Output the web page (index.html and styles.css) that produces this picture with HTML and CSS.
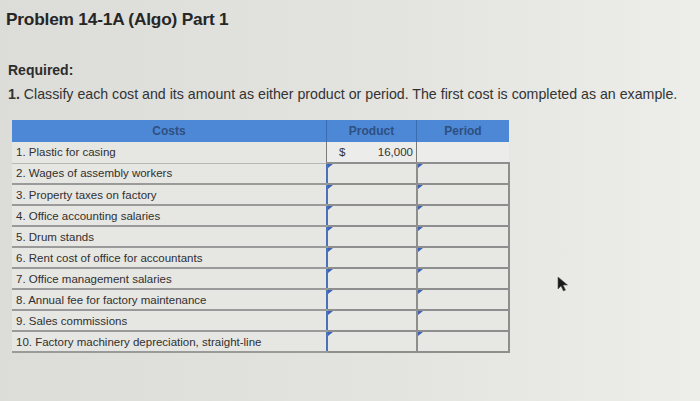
FILE: index.html
```html
<!DOCTYPE html>
<html>
<head>
<meta charset="utf-8">
<link rel="stylesheet" href="styles.css">
</head>
<body>
<div class="page">
  <h1 class="title">Problem 14-1A (Algo) Part 1</h1>
  <div class="req">
    <p class="req-label">Required:</p>
    <p class="req-text"><b>1.</b> Classify each cost and its amount as either product or period. The first cost is completed as an example.</p>
  </div>
  <table class="grid">
    <thead>
      <tr>
        <th class="c-cost">Costs</th>
        <th class="c-prod">Product</th>
        <th class="c-per">Period</th>
      </tr>
    </thead>
    <tbody>
      <tr class="first">
        <td class="cost">1. Plastic for casing</td>
        <td class="amt"><span class="dollar">$</span><span>16,000</span></td>
        <td class="blank"></td>
      </tr>
      <tr><td class="cost">2. Wages of assembly workers</td><td class="inp"><span class="tri"></span></td><td class="inp"><span class="tri"></span></td></tr>
      <tr><td class="cost">3. Property taxes on factory</td><td class="inp"><span class="tri"></span></td><td class="inp"><span class="tri"></span></td></tr>
      <tr><td class="cost">4. Office accounting salaries</td><td class="inp"><span class="tri"></span></td><td class="inp"><span class="tri"></span></td></tr>
      <tr><td class="cost">5. Drum stands</td><td class="inp"><span class="tri"></span></td><td class="inp"><span class="tri"></span></td></tr>
      <tr><td class="cost">6. Rent cost of office for accountants</td><td class="inp"><span class="tri"></span></td><td class="inp"><span class="tri"></span></td></tr>
      <tr><td class="cost">7. Office management salaries</td><td class="inp"><span class="tri"></span></td><td class="inp"><span class="tri"></span></td></tr>
      <tr><td class="cost">8. Annual fee for factory maintenance</td><td class="inp"><span class="tri"></span></td><td class="inp"><span class="tri"></span></td></tr>
      <tr><td class="cost">9. Sales commissions</td><td class="inp"><span class="tri"></span></td><td class="inp"><span class="tri"></span></td></tr>
      <tr><td class="cost">10. Factory machinery depreciation, straight-line</td><td class="inp"><span class="tri"></span></td><td class="inp"><span class="tri"></span></td></tr>
    </tbody>
  </table>
</div>
<svg class="cursor" width="12" height="16" viewBox="0 0 12 16">
  <path d="M1 1 L1 13 L4 10 L6.5 15 L8.5 14 L6 9 L10.5 9 Z" fill="#1a1a1a" stroke="#555" stroke-width="0.6"/>
</svg>
</body>
</html>
```

FILE: styles.css
```css
html, body {
  margin: 0;
  padding: 0;
}
body {
  width: 700px;
  height: 401px;
  overflow: hidden;
  background: linear-gradient(90deg, #dcdcd9 0%, #e3e3e0 55%, #ededea 100%);
  font-family: "Liberation Sans", Arial, sans-serif;
  color: #2a2a2a;
  position: relative;
}
.page {
  padding: 8px 0 0 6px;
}
.title {
  margin: 0;
  font-size: 17.3px;
  font-weight: bold;
  color: #262626;
  letter-spacing: -0.2px;
  line-height: 22px;
}
.req {
  margin-top: 31px;
  padding-left: 2px;
}
.req-label {
  margin: 0;
  font-size: 14px;
  font-weight: bold;
  line-height: 18px;
  color: #2c2c2c;
}
.req-text {
  margin: 6px 0 0 0;
  font-size: 14.2px;
  line-height: 18px;
  color: #333;
}
.grid {
  margin: 17px 0 0 6px;
  border-collapse: collapse;
  table-layout: fixed;
  width: 495px;
  font-size: 11.5px;
}
.grid th {
  background: #4c88d6;
  color: #2f4f80;
  font-weight: bold;
  font-size: 12px;
  height: 22px;
  padding: 0;
  text-align: center;
}
.c-cost { width: 314px; }
.c-prod { width: 89px; border-left: 1px solid #3a6cb0; }
.c-per { width: 92px; border-left: 1px solid #3a6cb0; }
.grid td {
  height: 19px;
  padding: 0;
}
.cost {
  padding-left: 4px !important;
  border-bottom: 2px solid #9a9a9a;
  color: #303030;
  background: #e6e6e3;
}
.first .cost, .first td {
  border-bottom: 1px solid #b8b8b8;
  height: 20px;
}
.amt {
  border-left: 1px solid #7a7a7a;
  background: #ececea;
  position: relative;
  color: #333;
}
.amt span:last-child {
  float: right;
  margin-right: 3px;
  line-height: 20px;
}
.dollar {
  margin-left: 12px;
  line-height: 20px;
}
.blank {
  border-left: 1px solid #7a7a7a;
  background: #ececea;
}
.inp {
  position: relative;
  border: 2px solid #8e8e8e;
  border-left: 2px solid #4a72b8;
  background: #e7e7e4;
}
.tri {
  position: absolute;
  left: 0;
  top: 0;
  width: 0;
  height: 0;
  border-top: 4px solid #3c64b4;
  border-right: 5px solid transparent;
}
.cursor {
  position: absolute;
  left: 557px;
  top: 276px;
}
```
